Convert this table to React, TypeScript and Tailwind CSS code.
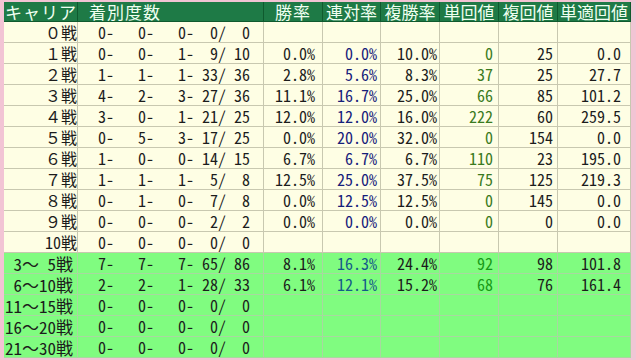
import React from "react";

type Row = {
  label: string;
  counts: [number, number, number, number, number];
  vals?: [string, string, string, string, string, string];
};

const yellowRows: Row[] = [
  { label: "０戦", counts: [0, 0, 0, 0, 0] },
  { label: "１戦", counts: [0, 0, 1, 9, 10], vals: ["0.0%", "0.0%", "10.0%", "0", "25", "0.0"] },
  { label: "２戦", counts: [1, 1, 1, 33, 36], vals: ["2.8%", "5.6%", "8.3%", "37", "25", "27.7"] },
  { label: "３戦", counts: [4, 2, 3, 27, 36], vals: ["11.1%", "16.7%", "25.0%", "66", "85", "101.2"] },
  { label: "４戦", counts: [3, 0, 1, 21, 25], vals: ["12.0%", "12.0%", "16.0%", "222", "60", "259.5"] },
  { label: "５戦", counts: [0, 5, 3, 17, 25], vals: ["0.0%", "20.0%", "32.0%", "0", "154", "0.0"] },
  { label: "６戦", counts: [1, 0, 0, 14, 15], vals: ["6.7%", "6.7%", "6.7%", "110", "23", "195.0"] },
  { label: "７戦", counts: [1, 1, 1, 5, 8], vals: ["12.5%", "25.0%", "37.5%", "75", "125", "219.3"] },
  { label: "８戦", counts: [0, 1, 0, 7, 8], vals: ["0.0%", "12.5%", "12.5%", "0", "145", "0.0"] },
  { label: "９戦", counts: [0, 0, 0, 2, 2], vals: ["0.0%", "0.0%", "0.0%", "0", "0", "0.0"] },
  { label: "10戦", counts: [0, 0, 0, 0, 0] },
];

const greenRows: Row[] = [
  { label: "3～ 5戦", counts: [7, 7, 7, 65, 86], vals: ["8.1%", "16.3%", "24.4%", "92", "98", "101.8"] },
  { label: "6～10戦", counts: [2, 2, 1, 28, 33], vals: ["6.1%", "12.1%", "15.2%", "68", "76", "161.4"] },
  { label: "11～15戦", counts: [0, 0, 0, 0, 0] },
  { label: "16～20戦", counts: [0, 0, 0, 0, 0] },
  { label: "21～30戦", counts: [0, 0, 0, 0, 0] },
];

const pad = (n: number, w: number) => String(n).padStart(w, " ");
const fmt = (c: Row["counts"]) =>
  `${pad(c[0], 2)}-${pad(c[1], 4)}-${pad(c[2], 4)}-${pad(c[3], 3)}/${pad(c[4], 3)}`;

const FONT = {
  fontFamily: "'Noto Sans Mono CJK JP', 'Noto Sans CJK JP', 'Liberation Mono', monospace",
};

function DataRow({ row, green }: { row: Row; green: boolean }) {
  const bg = green ? "bg-[#80fc80]" : "bg-[#fefee4]";
  const line = green ? "border-[#a8d8a0]" : "border-[#c8c8b0]";
  const cell = `h-[21px] border-r border-b ${line} flex items-center justify-end whitespace-pre leading-none`;
  const v = row.vals;
  return (
    <div className={`flex ${bg} text-[16px] text-[#1c1c1c]`}>
      <div
        className={`w-[74px] ${cell} ${green ? "justify-end pr-[4px] text-[17px]" : "justify-center"}`}
      >
        {row.label}
      </div>
      <div className={`w-[186px] ${cell} pr-[13px]`}>{fmt(row.counts)}</div>
      <div className={`w-[59px] ${cell} pr-[7px]`}>{v ? v[0] : ""}</div>
      <div className={`w-[58px] ${cell} pr-[3px] ${green ? "text-[#145a8a]" : "text-[#16207a]"}`}>
        {v ? v[1] : ""}
      </div>
      <div className={`w-[59px] ${cell} pr-[2px]`}>{v ? v[2] : ""}</div>
      <div className={`w-[59px] ${cell} pr-[5px] ${green ? "text-[#189a18]" : "text-[#3a7a20]"}`}>
        {v ? v[3] : ""}
      </div>
      <div className={`w-[59px] ${cell} pr-[4px]`}>{v ? v[4] : ""}</div>
      <div className={`w-[73px] ${cell} pr-[9px]`}>{v ? v[5] : ""}</div>
    </div>
  );
}

export default function App() {
  const hcell =
    "h-[20px] border-r border-b border-[#0f5a2e] flex items-center text-[17px] leading-none text-[#effff0] whitespace-pre";
  return (
    <div className="w-[636px] h-[360px] bg-[#f2c4d4] pl-[4px] pt-[2px] overflow-hidden" style={FONT}>
      <div className="w-[627px]">
        <div className="flex bg-[#1e7a46]">
          <div className={`w-[74px] ${hcell} pl-[1px] tracking-[1px]`}>キャリア</div>
          <div className={`w-[186px] ${hcell} pl-[11px] tracking-[1px]`}>着別度数</div>
          <div className={`w-[59px] ${hcell} justify-center tracking-[1px]`}>勝率</div>
          <div className={`w-[58px] ${hcell} justify-center`}>連対率</div>
          <div className={`w-[59px] ${hcell} justify-center`}>複勝率</div>
          <div className={`w-[59px] ${hcell} justify-center`}>単回値</div>
          <div className={`w-[59px] ${hcell} justify-center`}>複回値</div>
          <div className={`w-[73px] ${hcell} justify-center`}>単適回値</div>
        </div>
        {yellowRows.map((r) => (
          <DataRow key={r.label} row={r} green={false} />
        ))}
        {greenRows.map((r) => (
          <DataRow key={r.label} row={r} green={true} />
        ))}
      </div>
    </div>
  );
}
